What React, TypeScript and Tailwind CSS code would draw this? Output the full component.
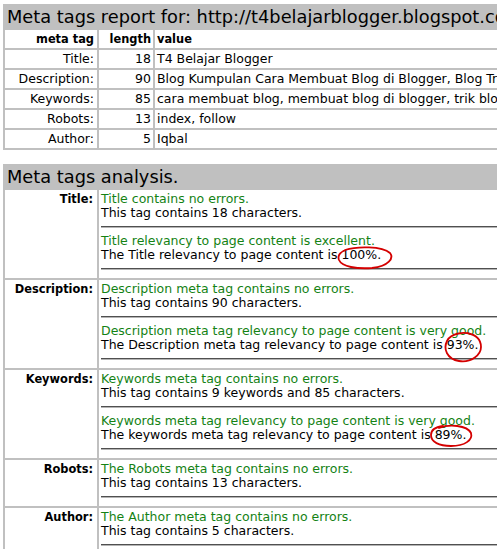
import React from "react";

const FONT = "font-['DejaVu_Sans',Verdana,sans-serif]";

function Hr() {
  return <div className="my-[6px] h-[2px] border-t border-b border-t-[#505050] border-b-[#b4b4b4]" />;
}

function Circled({ children, cls, d }: { children: React.ReactNode; cls: string; d: string }) {
  return (
    <span className="relative">
      {children}
      <svg className={"absolute pointer-events-none overflow-visible " + cls} fill="none">
        <path d={d} stroke="#d40000" strokeWidth="1.8" strokeLinecap="round" />
      </svg>
    </span>
  );
}

type Para = { g: string; b: React.ReactNode };

function Row({ label, paras }: { label: string; paras: Para[] }) {
  return (
    <tr>
      <td className="bg-white p-[2px] pr-[4px] align-top text-right font-bold text-[11.4px] leading-[14px] whitespace-nowrap">{label}</td>
      <td className="bg-white p-[2px] align-top whitespace-nowrap">
        {paras.map((p, i) => (
          <div key={i}>
            {i > 0 && <Hr />}
            <div className="leading-[14px]">
              <div className="text-[#148214]">{p.g}</div>
              <div className="text-black">{p.b}</div>
            </div>
          </div>
        ))}
        <Hr />
      </td>
    </tr>
  );
}

export default function App() {
  const meta = [
    ["Title:", "18", "T4 Belajar Blogger"],
    ["Description:", "90", "Blog Kumpulan Cara Membuat Blog di Blogger, Blog Trik dan Tips Blogger"],
    ["Keywords:", "85", "cara membuat blog, membuat blog di blogger, trik blogger, tips blogger"],
    ["Robots:", "13", "index, follow"],
    ["Author:", "5", "Iqbal"],
  ];
  return (
    <div className={"w-[497px] h-[549px] overflow-hidden bg-white pt-[4px] pl-[3px] text-[12.5px] text-black " + FONT}>
      <table className="table-fixed border-separate border-spacing-[2px] bg-[#c0c0c0] w-[700px]">
        <colgroup>
          <col className="w-[92px]" />
          <col className="w-[54px]" />
          <col />
        </colgroup>
        <tbody>
          <tr>
            <td colSpan={3} className="h-[22px] px-[2px] py-0 text-[17.8px] leading-[22px] whitespace-nowrap bg-[#c0c0c0]">
              Meta tags report for: http://t4belajarblogger.blogspot.com
            </td>
          </tr>
          <tr>
            <td className="bg-white px-[3px] py-px leading-4 text-right font-bold text-[11.4px]">meta tag</td>
            <td className="bg-white px-[2px] py-px leading-4 text-right font-bold text-[11.4px]">length</td>
            <td className="bg-white px-[2px] py-px leading-4 font-bold text-[11.4px]">value</td>
          </tr>
          {meta.map((r) => (
            <tr key={r[0]}>
              <td className="bg-white px-[3px] py-px leading-4 text-right whitespace-nowrap">{r[0]}</td>
              <td className="bg-white px-[2px] py-px leading-4 text-right">{r[1]}</td>
              <td className="bg-white px-[2px] py-px leading-4 whitespace-nowrap">{r[2]}</td>
            </tr>
          ))}
        </tbody>
      </table>

      <table className="mt-[14px] table-fixed border-separate border-spacing-[2px] bg-[#c0c0c0] w-[700px]">
        <colgroup>
          <col className="w-[92px]" />
          <col />
        </colgroup>
        <tbody>
          <tr>
            <td colSpan={2} className="h-[22px] px-[2px] py-0 text-[17.8px] leading-[22px] whitespace-nowrap bg-[#c0c0c0]">
              Meta tags analysis.
            </td>
          </tr>
          <Row
            label="Title:"
            paras={[
              { g: "Title contains no errors.", b: "This tag contains 18 characters." },
              {
                g: "Title relevancy to page content is excellent.",
                b: (
                  <>
                    The Title relevancy to page content is{" "}
                    <Circled
                      cls="left-[-4px] top-[-1px] w-[56px] h-[23px]"
                      d="M8 4 C 20 0, 45 0, 53 7 C 57 12, 52 20, 35 22 C 20 23, 5 21, 2 14 C 0 9, 4 5, 12 3"
                    >
                      100%.
                    </Circled>
                  </>
                ),
              },
            ]}
          />
          <Row
            label="Description:"
            paras={[
              { g: "Description meta tag contains no errors.", b: "This tag contains 90 characters." },
              {
                g: "Description meta tag relevancy to page content is very good.",
                b: (
                  <>
                    The Description meta tag relevancy to page content is{" "}
                    <Circled
                      cls="left-[-4px] top-[-6px] w-[40px] h-[32px]"
                      d="M30 4 C 22 0, 8 2, 4 10 C 0 18, 4 28, 16 30 C 28 32, 38 24, 38 16 C 38 9, 34 4, 24 2"
                    >
                      93%.
                    </Circled>
                  </>
                ),
              },
            ]}
          />
          <Row
            label="Keywords:"
            paras={[
              { g: "Keywords meta tag contains no errors.", b: "This tag contains 9 keywords and 85 characters." },
              {
                g: "Keywords meta tag relevancy to page content is very good.",
                b: (
                  <>
                    The keywords meta tag relevancy to page content is{" "}
                    <Circled
                      cls="left-[-6px] top-[-3px] w-[44px] h-[23px]"
                      d="M10 4 C 20 0, 38 1, 42 9 C 44 16, 36 22, 22 22 C 10 22, 2 18, 2 11 C 2 6, 6 3, 14 2"
                    >
                      89%.
                    </Circled>
                  </>
                ),
              },
            ]}
          />
          <Row
            label="Robots:"
            paras={[{ g: "The Robots meta tag contains no errors.", b: "This tag contains 13 characters." }]}
          />
          <Row
            label="Author:"
            paras={[{ g: "The Author meta tag contains no errors.", b: "This tag contains 5 characters." }]}
          />
        </tbody>
      </table>
    </div>
  );
}
